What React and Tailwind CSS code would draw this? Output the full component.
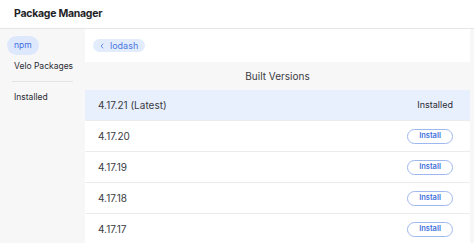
import { ChevronLeft } from 'lucide-react';

const versions = [
  { v: '4.17.21 (Latest)', installed: true },
  { v: '4.17.20' },
  { v: '4.17.19' },
  { v: '4.17.18' },
  { v: '4.17.17' },
];

export default function App() {
  return (
    <div className="h-[243px] w-[474px] overflow-hidden bg-[#f7f7f8] text-[#2b2b33]" style={{ fontFamily: 'Inter, "Noto Sans", sans-serif' }}>
      <div className="flex h-[29px] items-center border-b border-[#e6e6ea] bg-white px-[14px]">
        <h1 className="text-[10.5px] font-bold tracking-tight text-[#1f1f26]">Package Manager</h1>
      </div>

      <div className="flex">
        <div className="w-[85px] shrink-0 pt-[7px]">
          <div className="ml-[7px] flex h-[19px] w-fit items-center rounded-full bg-[#dde8fc] px-[7px] text-[8.5px] text-[#3e6fdc]">npm</div>
          <div className="mt-[4px] pl-[14px] text-[8.5px] leading-[14px]">Velo Packages</div>
          <div className="mx-[12px] mt-[8px] h-px bg-[#e3e3e8]" />
          <div className="mt-[8px] pl-[14px] text-[8.5px] leading-[14px]">Installed</div>
        </div>

        <div className="mr-[4px] flex-1">
          <div className="flex h-[33px] items-center bg-white pl-[8px]">
            <div className="flex h-[13px] items-center gap-[4px] rounded-full bg-[#e3ecfc] pl-[5px] pr-[7px] text-[9px] text-[#4a78de]">
              <ChevronLeft size={8} strokeWidth={2.5} />
              <span>lodash</span>
            </div>
          </div>
          <div className="flex h-[28px] items-center justify-center text-[10px] text-[#3a3a42]">Built Versions</div>
          <div>
            {versions.map(r => (
              <div key={r.v} className={`flex h-[31px] items-center justify-between border-b border-[#ececf0] pl-[13px] pr-[17px] text-[10px] ${r.installed ? 'bg-[#e8effd]' : 'bg-white'}`}>
                <span className="text-[#3a3a42]">{r.v}</span>
                {r.installed ? (
                  <span className="text-[9px] text-[#2b2b33]">Installed</span>
                ) : (
                  <button className="flex h-[15px] w-[46px] items-center justify-center rounded-full border border-[#9fb7ef] text-[7.5px] font-semibold text-[#3e6fdc]">Install</button>
                )}
              </div>
            ))}
          </div>
        </div>
      </div>
    </div>
  );
}
